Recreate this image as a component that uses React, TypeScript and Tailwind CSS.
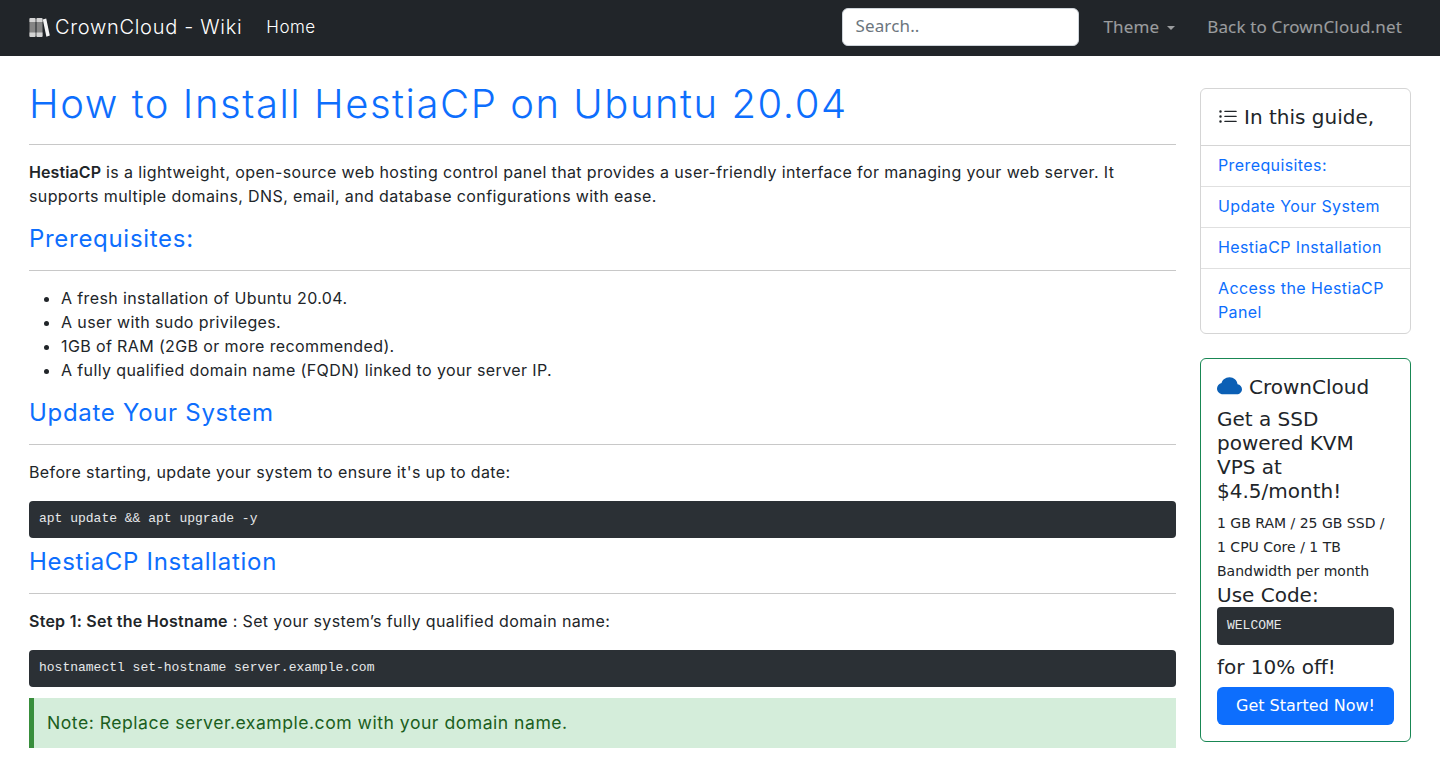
import React from 'react';

const sans = 'font-["Inter","Noto_Sans",sans-serif]';

const H3: React.FC<{ children: React.ReactNode }> = ({ children }) => (
  <>
    <h3 className="-mt-px mb-[17px] text-[24px] font-normal leading-[29px] tracking-[0.7px] text-[#0d6efd]">{children}</h3>
    <hr className="mb-4 border-0 border-t border-[#c8c8c8]" />
  </>
);

const Code: React.FC<{ children: React.ReactNode }> = ({ children }) => (
  <pre className="mb-2.5 rounded bg-[#2b3035] px-2.5 pb-2.5 pt-2 font-['Liberation_Mono',monospace] text-[13px] leading-[19px] text-[#e6e8ea]">
    {children}
  </pre>
);

const BooksIcon = () => (
  <svg width="21" height="21" viewBox="0 0 21 21" className="shrink-0">
    <rect x="0.5" y="1" width="6" height="19" rx="1" fill="#858585" />
    <rect x="7.5" y="1" width="6" height="19" rx="1" fill="#858585" />
    <path d="M0.5 2a1 1 0 0 1 1-1h4a1 1 0 0 1 1 1v3h-6zM7.5 2a1 1 0 0 1 1-1h4a1 1 0 0 1 1 1v3h-6z" fill="#d4d4d4" />
    <path d="M0.5 15.5h6V19a1 1 0 0 1-1 1h-4a1 1 0 0 1-1-1zM7.5 15.5h6V19a1 1 0 0 1-1 1h-4a1 1 0 0 1-1-1z" fill="#d4d4d4" />
    <path d="M13.8 2.6 L17.2 1.4 L20.8 18.6 L17.4 19.8 Z" fill="#f4f4f4" />
  </svg>
);

const ListIcon = () => (
  <svg width="20" height="20" viewBox="0 0 16 16" fill="#212529" className="shrink-0">
    <path fillRule="evenodd" d="M5 11.5a.5.5 0 0 1 .5-.5h9a.5.5 0 0 1 0 1h-9a.5.5 0 0 1-.5-.5zm0-4a.5.5 0 0 1 .5-.5h9a.5.5 0 0 1 0 1h-9a.5.5 0 0 1-.5-.5zm0-4a.5.5 0 0 1 .5-.5h9a.5.5 0 0 1 0 1h-9a.5.5 0 0 1-.5-.5zm-3 1a1 1 0 1 0 0-2 1 1 0 0 0 0 2zm0 4a1 1 0 1 0 0-2 1 1 0 0 0 0 2zm0 4a1 1 0 1 0 0-2 1 1 0 0 0 0 2z" />
  </svg>
);

const CloudIcon = () => (
  <svg width="25" height="25" viewBox="0 0 16 16" fill="#0b5fb5" className="shrink-0">
    <path d="M4.406 3.342A5.53 5.53 0 0 1 8 2c2.69 0 4.923 2 5.166 4.579C14.758 6.804 16 8.137 16 9.773 16 11.569 14.502 13 12.687 13H3.781C1.708 13 0 11.366 0 9.318c0-1.763 1.266-3.223 2.942-3.593.143-.863.698-1.723 1.464-2.383z" />
  </svg>
);

const guideLinks = ['Prerequisites:', 'Update Your System', 'HestiaCP Installation', 'Access the HestiaCP Panel'];

const App: React.FC = () => {
  return (
    <div className={`h-[761px] overflow-hidden bg-white text-[#212529] ${sans}`}>
      <nav className="flex h-14 items-center bg-[#212529] pb-0.5 pl-[29px] pr-[38px]">
        <a className="flex items-center gap-[5px] text-[20px] font-light tracking-[0.7px] text-white">
          <BooksIcon />
          <span>CrownCloud - Wiki</span>
        </a>
        <a className="ml-6 mt-0.5 text-[17px] font-light tracking-[0.5px] text-white">Home</a>
        <div className="ml-auto flex items-center font-['Noto_Sans',sans-serif] text-[17px] tracking-[0.15px] text-white/55">
          <input
            placeholder="Search.."
            className="h-[38px] w-[237px] rounded-md border border-[#ced4da] bg-white px-3 pb-[3px] text-[17px] text-[#212529] outline-none placeholder:text-[#6c757d]"
          />
          <a className="ml-6 flex items-center gap-2">
            Theme
            <span className="mt-0.5 h-0 w-0 border-x-[4.8px] border-t-[4.8px] border-x-transparent border-t-white/55" />
          </a>
          <a className="ml-8">Back to CrownCloud.net</a>
        </div>
      </nav>

      <div className="flex items-start gap-6 pl-[29px] pr-[29px] pt-6">
        <main className="min-w-0 flex-1">
          <h1 className="mb-4 text-[40px] font-light leading-[48px] tracking-[1.55px] text-[#0d6efd]">
            How to Install HestiaCP on Ubuntu 20.04
          </h1>
          <hr className="mb-4 border-0 border-t border-[#c8c8c8]" />
          <p className="-mt-px mb-[17px] text-[16px] leading-6 tracking-[0.38px]">
            <strong className="font-semibold tracking-[0.1px]">HestiaCP</strong> is a lightweight, open-source web hosting control panel that provides a user-friendly interface for managing your web server. It supports multiple domains, DNS, email, and database configurations with ease.
          </p>
          <H3>Prerequisites:</H3>
          <ul className="-mt-px mb-[17px] list-disc pl-8 text-[16px] leading-6 tracking-[0.38px]">
            <li>A fresh installation of Ubuntu 20.04.</li>
            <li>A user with sudo privileges.</li>
            <li>1GB of RAM (2GB or more recommended).</li>
            <li>A fully qualified domain name (FQDN) linked to your server IP.</li>
          </ul>
          <H3>Update Your System</H3>
          <p className="-mt-px mb-[17px] text-[16px] leading-6 tracking-[0.38px]">Before starting, update your system to ensure it's up to date:</p>
          <Code>apt update &amp;&amp; apt upgrade -y</Code>
          <H3>HestiaCP Installation</H3>
          <p className="-mt-px mb-[17px] text-[16px] leading-6 tracking-[0.38px]">
            <strong className="font-semibold tracking-[0.25px]">Step 1: Set the Hostname</strong> : Set your system’s fully qualified domain name:
          </p>
          <Code>hostnamectl set-hostname server.example.com</Code>
          <div className="mt-[11px] border-l-[5px] border-[#388e3c] bg-[#d4edda] py-[13px] pl-[13px] text-[17.6px] leading-6 tracking-[0.5px] text-[#1b5e20]">
            Note: Replace server.example.com with your domain name.
          </div>
        </main>

        <aside className="w-[211px] shrink-0 pt-2">
          <div className="mb-6 rounded-md border border-[#d5d5d5]">
            <div className="flex items-center gap-1.5 border-b border-[#d5d5d5] px-[17px] py-[13px] font-['DejaVu_Sans',sans-serif] text-[20px] leading-[30px]">
              <ListIcon />
              <span>In this guide,</span>
            </div>
            {guideLinks.map((link, i) => (
              <div key={link} className={`px-[17px] pb-[9px] pt-[7px] text-[16px] leading-6 tracking-[0.4px] text-[#0d6efd] ${i > 0 ? 'border-t border-[#e0e0e0]' : ''}`}>
                {link}
              </div>
            ))}
          </div>

          <div className="rounded-md border border-[#198754] pb-4 pl-4 pr-4 pt-[15px] font-['DejaVu_Sans',sans-serif]">
            <div className="mb-2 flex items-center gap-[7px] text-[20px] leading-6">
              <CloudIcon />
              <span>CrownCloud</span>
            </div>
            <div className="text-[20px] leading-6">Get a SSD powered KVM VPS at $4.5/month!</div>
            <div className="mt-2 text-[14px] leading-6">1 GB RAM / 25 GB SSD / 1 CPU Core / 1 TB Bandwidth per month</div>
            <div className="text-[20px] leading-6">Use Code:</div>
            <pre className="mb-2.5 rounded bg-[#2b3035] px-2.5 py-[9px] font-['Liberation_Mono',monospace] text-[13px] leading-5 text-[#e6e8ea]">WELCOME</pre>
            <div className="mb-2 text-[20px] leading-6">for 10% off!</div>
            <button className="h-[38px] w-full rounded-md bg-[#0d6efd] text-[16px] text-white">Get Started Now!</button>
          </div>
        </aside>
      </div>
    </div>
  );
};

export default App;
